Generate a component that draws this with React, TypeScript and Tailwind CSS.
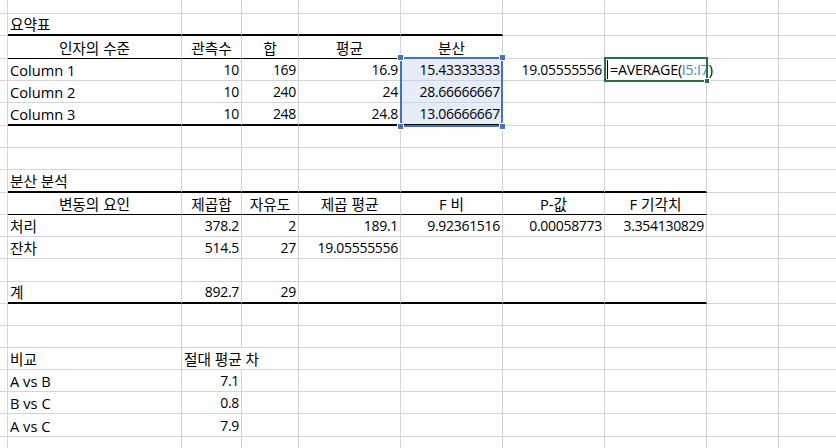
import React from "react"

type Align = 'l' | 'r' | 'c'
type Cell = { t: string; a?: Align; num?: boolean }

const R = 21
const C = 10

// sheet contents, keyed "row-col"
const cells: Record<string, Cell> = {
  '1-1': { t: '요약표' },
  '2-1': { t: '인자의 수준', a: 'c' },
  '2-2': { t: '관측수', a: 'c' },
  '2-3': { t: '합', a: 'c' },
  '2-4': { t: '평균', a: 'c' },
  '2-5': { t: '분산', a: 'c' },
  '3-1': { t: 'Column 1' },
  '3-2': { t: '10', num: true },
  '3-3': { t: '169', num: true },
  '3-4': { t: '16.9', num: true },
  '3-5': { t: '15.43333333', num: true },
  '3-6': { t: '19.05555556', num: true },
  '4-1': { t: 'Column 2' },
  '4-2': { t: '10', num: true },
  '4-3': { t: '240', num: true },
  '4-4': { t: '24', num: true },
  '4-5': { t: '28.66666667', num: true },
  '5-1': { t: 'Column 3' },
  '5-2': { t: '10', num: true },
  '5-3': { t: '248', num: true },
  '5-4': { t: '24.8', num: true },
  '5-5': { t: '13.06666667', num: true },
  '8-1': { t: '분산 분석' },
  '9-1': { t: '변동의 요인', a: 'c' },
  '9-2': { t: '제곱합', a: 'c' },
  '9-3': { t: '자유도', a: 'c' },
  '9-4': { t: '제곱 평균', a: 'c' },
  '9-5': { t: 'F 비', a: 'c' },
  '9-6': { t: 'P-값', a: 'c' },
  '9-7': { t: 'F 기각치', a: 'c' },
  '10-1': { t: '처리' },
  '10-2': { t: '378.2', num: true },
  '10-3': { t: '2', num: true },
  '10-4': { t: '189.1', num: true },
  '10-5': { t: '9.92361516', num: true },
  '10-6': { t: '0.00058773', num: true },
  '10-7': { t: '3.354130829', num: true },
  '11-1': { t: '잔차' },
  '11-2': { t: '514.5', num: true },
  '11-3': { t: '27', num: true },
  '11-4': { t: '19.05555556', num: true },
  '13-1': { t: '계' },
  '13-2': { t: '892.7', num: true },
  '13-3': { t: '29', num: true },
  '16-1': { t: '비교' },
  '16-2': { t: '절대 평균 차' },
  '17-1': { t: 'A vs B' },
  '17-2': { t: '7.1', num: true },
  '18-1': { t: 'B vs C' },
  '18-2': { t: '0.8', num: true },
  '19-1': { t: 'A vs C' },
  '19-2': { t: '7.9', num: true },
}

function bottomBorder(r: number, c: number) {
  const top = c >= 1 && c <= 5
  const anova = c >= 1 && c <= 7
  if ((r === 1 || r === 5) && top) return 'border-b-2 border-b-black'
  if ((r === 8 || r === 13) && anova) return 'border-b-2 border-b-black'
  if (r === 2 && top) return 'border-b border-b-black'
  if (r === 9 && anova) return 'border-b border-b-black'
  if ((r === 3 || r === 4) && c === 5) return 'border-b border-b-[#c9d5ea]'
  return 'border-b border-b-[#d4d4d4]'
}

function SheetCell({ r, c }: { r: number; c: number }) {
  const cell = cells[`${r}-${c}`]
  const selected = c === 5 && r >= 3 && r <= 5
  const align = cell?.num ? 'r' : cell?.a ?? 'l'
  return (
    <div
      style={{ gridRow: r + 1, gridColumn: c + 1 }}
      className={[
        'flex items-end whitespace-nowrap min-w-0',
        r === 16 && c === 2 ? 'border-r border-r-transparent' : 'border-r border-r-[#d4d4d4]',
        bottomBorder(r, c),
        selected ? 'bg-[#e6edf8]' : '',
        align === 'r' ? 'justify-end pr-[2px]' : align === 'c' ? 'justify-center' : 'justify-start pl-[2px]',
      ].join(' ')}
    >
      {cell && (
        <span
          className={[
            'leading-[18px] pb-[1px]',
            cell.num ? 'text-[14px] tracking-[-0.3px]' : 'text-[14.67px]',
          ].join(' ')}
        >
          {cell.t}
        </span>
      )}
      {r === 3 && c === 7 && (
        <span className="leading-[18px] pb-[1px] text-[14.3px] tracking-[-0.25px] pl-[3px]">
          =AVERAGE(<span className="text-[#4a7fd4]">I5:I7</span>)
        </span>
      )}
    </div>
  )
}

function Handle({ pos, color }: { pos: string; color: string }) {
  return <div className={`absolute w-[7px] h-[7px] border border-white ${pos} ${color}`} />
}

export default function App() {
  return (
    <div
      className="w-[836px] h-[448px] overflow-hidden bg-white text-black"
      style={{ fontFamily: '"Open Sans", "Noto Sans CJK KR", sans-serif' }}
    >
      <div className="grid grid-cols-[8px_174px_60px_57px_102px_102px_102px_102px_72px_80px] grid-rows-[14px_22px_23px_22px_22px_23px_22px_22px_23px_22px_22px_22px_23px_22px_22px_22px_22px_22px_22px_23px_22px]">
        {Array.from({ length: R }).map((_, r) =>
          Array.from({ length: C }).map((_, c) => <SheetCell key={`${r}-${c}`} r={r} c={c} />)
        )}

        {/* referenced range I5:I7 */}
        <div className="relative col-start-6 row-start-4 row-span-3 -ml-[1px] -mt-[2px] -mb-[1px] border-2 border-[#4472c4]">
          <Handle pos="-left-[5px] -top-[5px]" color="bg-[#4472c4]" />
          <Handle pos="-right-[5px] -top-[5px]" color="bg-[#4472c4]" />
          <Handle pos="-left-[5px] -bottom-[5px]" color="bg-[#4472c4]" />
          <Handle pos="-right-[5px] -bottom-[5px]" color="bg-[#4472c4]" />
        </div>

        {/* active cell in edit mode */}
        <div className="relative col-start-8 row-start-4 -ml-[1px] -mr-[1px] -mt-[2px] -mb-[1px] border-2 border-[#217346]">
          <div className="absolute left-[1px] top-[1px] bottom-[1px] w-[1px] bg-black" />
          <div className="absolute -right-[4px] -bottom-[4px] w-[6px] h-[6px] bg-[#217346] border border-white" />
        </div>
      </div>
    </div>
  )
}
